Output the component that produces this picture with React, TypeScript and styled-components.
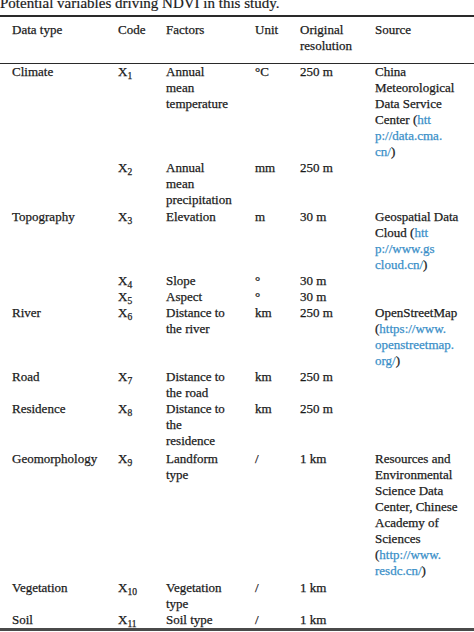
import React from "react"
import styled, { createGlobalStyle } from "styled-components"

const GlobalStyle = createGlobalStyle`
  html, body {
    margin: 0;
    padding: 0;
    background: #ffffff;
  }
  body {
    font-family: "Liberation Serif", "Times New Roman", serif;
    color: #1b1b1b;
    overflow: hidden;
  }
`

const Page = styled.div`
  width: 474px;
  height: 632px;
  overflow: hidden;
`

const Caption = styled.div`
  font-size: 15px;
  line-height: 16px;
  margin-top: -5px;
  white-space: nowrap;
  -webkit-text-stroke: 0.2px currentColor;
`

const Table = styled.table`
  width: 474px;
  margin-top: 4px;
  border-collapse: collapse;
  table-layout: fixed;
  font-size: 13px;
  line-height: 16px;
  border-top: 2px solid #2a2a2a;
  border-bottom: 3px solid #4a4a4a;
  -webkit-text-stroke: 0.25px currentColor;
`

const HeadRow = styled.tr`
  border-bottom: 1px solid #2a2a2a;
`

const HeadCell = styled.th`
  font-weight: normal;
  text-align: left;
  vertical-align: top;
  padding: 5px 0 9px 0;
  &:first-child {
    padding-left: 12px;
  }
`

const Cell = styled.td<{ $gap?: number }>`
  vertical-align: top;
  padding: ${(p) => p.$gap ?? 0}px 0 0 0;
  white-space: nowrap;
  &:first-child {
    padding-left: 12px;
  }
`

const Sub = styled.sub`
  font-size: 9.5px;
  line-height: 0;
  vertical-align: -3px;
`

const Link = styled.span`
  color: #3a8fc8;
`

type Row = {
  type?: string
  code: string
  factor: string[]
  unit: string
  res: string
  source?: React.ReactNode
  gap?: number
}

const lines = (items: string[]) =>
  items.map((t, i) => (
    <React.Fragment key={i}>
      {i > 0 && <br />}
      {t}
    </React.Fragment>
  ))

const rows: Row[] = [
  {
    type: "Climate",
    code: "1",
    factor: ["Annual", "mean", "temperature"],
    unit: "°C",
    res: "250 m",
    source: (
      <>
        China
        <br />
        Meteorological
        <br />
        Data Service
        <br />
        Center (<Link>htt</Link>
        <br />
        <Link>p://data.cma.</Link>
        <br />
        <Link>cn/</Link>)
      </>
    ),
  },
  { code: "2", factor: ["Annual", "mean", "precipitation"], unit: "mm", res: "250 m" },
  {
    type: "Topography",
    code: "3",
    factor: ["Elevation"],
    unit: "m",
    res: "30 m",
    gap: 1,
    source: (
      <>
        Geospatial Data
        <br />
        Cloud (<Link>htt</Link>
        <br />
        <Link>p://www.gs</Link>
        <br />
        <Link>cloud.cn/</Link>)
      </>
    ),
  },
  { code: "4", factor: ["Slope"], unit: "°", res: "30 m" },
  { code: "5", factor: ["Aspect"], unit: "°", res: "30 m" },
  {
    type: "River",
    code: "6",
    factor: ["Distance to", "the river"],
    unit: "km",
    res: "250 m",
    source: (
      <>
        OpenStreetMap
        <br />
        (<Link>https://www.</Link>
        <br />
        <Link>openstreetmap.</Link>
        <br />
        <Link>org/</Link>)
      </>
    ),
  },
  { type: "Road", code: "7", factor: ["Distance to", "the road"], unit: "km", res: "250 m" },
  {
    type: "Residence",
    code: "8",
    factor: ["Distance to", "the", "residence"],
    unit: "km",
    res: "250 m",
  },
  {
    type: "Geomorphology",
    code: "9",
    factor: ["Landform", "type"],
    unit: "/",
    res: "1 km",
    gap: 2,
    source: (
      <>
        Resources and
        <br />
        Environmental
        <br />
        Science Data
        <br />
        Center, Chinese
        <br />
        Academy of
        <br />
        Sciences
        <br />
        (<Link>http://www.</Link>
        <br />
        <Link>resdc.cn/</Link>)
      </>
    ),
  },
  {
    type: "Vegetation",
    code: "10",
    factor: ["Vegetation", "type"],
    unit: "/",
    res: "1 km",
    gap: 1,
  },
  { type: "Soil", code: "11", factor: ["Soil type"], unit: "/", res: "1 km" },
]

export default function App() {
  return (
    <Page>
      <GlobalStyle />
      <Caption>Potential variables driving NDVI in this study.</Caption>
      <Table>
        <colgroup>
          <col style={{ width: 118 }} />
          <col style={{ width: 48 }} />
          <col style={{ width: 89 }} />
          <col style={{ width: 45 }} />
          <col style={{ width: 75 }} />
          <col />
        </colgroup>
        <thead>
          <HeadRow>
            <HeadCell>Data type</HeadCell>
            <HeadCell>Code</HeadCell>
            <HeadCell>Factors</HeadCell>
            <HeadCell>Unit</HeadCell>
            <HeadCell>
              Original
              <br />
              resolution
            </HeadCell>
            <HeadCell>Source</HeadCell>
          </HeadRow>
        </thead>
        <tbody>
          {rows.map((r, i) => (
            <tr key={i}>
              <Cell $gap={r.gap}>{r.type}</Cell>
              <Cell $gap={r.gap}>
                X<Sub>{r.code}</Sub>
              </Cell>
              <Cell $gap={r.gap}>{lines(r.factor)}</Cell>
              <Cell $gap={r.gap}>{r.unit}</Cell>
              <Cell $gap={r.gap}>{r.res}</Cell>
              <Cell $gap={r.gap}>{r.source}</Cell>
            </tr>
          ))}
        </tbody>
      </Table>
    </Page>
  )
}
